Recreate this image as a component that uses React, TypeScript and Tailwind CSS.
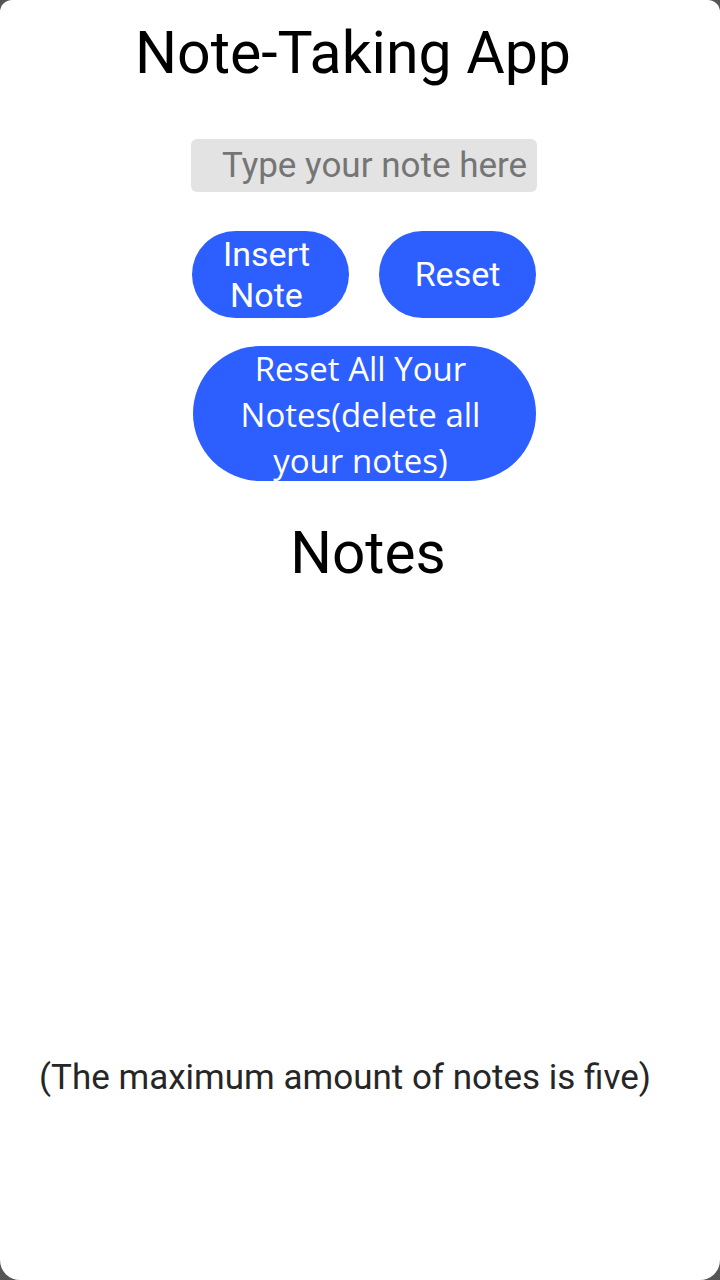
import { useState } from "react";

const MAX_NOTES = 5;

export default function App() {
  const [draft, setDraft] = useState("");
  const [notes, setNotes] = useState<string[]>([]);

  const insertNote = () => {
    if (!draft.trim() || notes.length >= MAX_NOTES) return;
    setNotes([...notes, draft.trim()]);
    setDraft("");
  };

  return (
    <div className="bg-[#555555] w-[720px] h-[1280px]">
      <div className="bg-white w-full h-full rounded-t-[12px] rounded-b-[20px] flex flex-col items-center font-['Roboto',sans-serif]">
        <h1 className="mt-[19px] pr-[14px] text-[59px] leading-[67px] text-black">Note-Taking App</h1>

        <div className="mt-[53px] ml-[8px] w-[346px] flex flex-col items-center">
          <input
            value={draft}
            onChange={(e) => setDraft(e.target.value)}
            placeholder="Type your note here"
            className="w-full h-[53px] rounded-[6px] bg-[#e3e3e3] pl-[31px] pr-2 text-[35px] text-black placeholder:text-[#757575] outline-none"
          />

          <div className="mt-[39px] w-full flex justify-between px-[1px]">
            <button
              onClick={insertNote}
              className="w-[157px] h-[87px] rounded-full bg-[#2d5eff] text-white text-[34px] leading-[41px] pl-5 pr-7"
            >
              Insert Note
            </button>
            <button
              onClick={() => setDraft("")}
              className="w-[157px] h-[87px] rounded-full bg-[#2d5eff] text-white text-[34px] leading-[41px]"
            >
              Reset
            </button>
          </div>

          <button
            onClick={() => setNotes([])}
            className="mt-[28px] ml-[1px] w-[343px] h-[135px] rounded-full bg-[#2d5eff] text-white font-['Open_Sans',sans-serif] text-[33px] leading-[46px] pl-6 pr-8 flex items-start justify-center"
          >
            <span>Reset All Your Notes(delete all your notes)</span>
          </button>
        </div>

        <h2 className="mt-[39px] ml-[16px] text-[58.5px] leading-[67px] text-black">Notes</h2>

        <ul className="h-[470px] w-full flex flex-col items-center text-[30px] text-black">
          {notes.map((n, i) => (
            <li key={i}>{n}</li>
          ))}
        </ul>

        <p className="pr-[30px] text-[35px] leading-[41px] text-[#262626]">(The maximum amount of notes is five)</p>
      </div>
    </div>
  );
}
